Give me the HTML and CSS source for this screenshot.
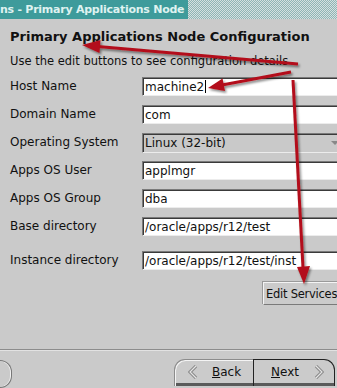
FILE: index.html
```html
<!DOCTYPE html>
<html>
<head>
<meta charset="utf-8">
<link rel="stylesheet" href="styles.css">
</head>
<body>
<div class="titlebar">
  <span class="title">ns - Primary Applications Node</span>
  <span class="dither"></span>
</div>
<main class="content">
  <h1 class="heading">Primary Applications Node Configuration</h1>
  <p class="hint">Use the edit buttons to see configuration details</p>
  <div class="form">
    <label class="lbl">Host Name</label>
    <div class="field"><span class="val">machine2</span><span class="caret"></span></div>
    <label class="lbl">Domain Name</label>
    <div class="field"><span class="val">com</span></div>
    <label class="lbl">Operating System</label>
    <div class="field select"><span class="val">Linux (32-bit)</span><span class="drop"></span></div>
    <label class="lbl">Apps OS User</label>
    <div class="field"><span class="val">applmgr</span></div>
    <label class="lbl">Apps OS Group</label>
    <div class="field"><span class="val">dba</span></div>
    <label class="lbl">Base directory</label>
    <div class="field"><span class="val">/oracle/apps/r12/test</span></div>
    <label class="lbl gap">Instance directory</label>
    <div class="field gap"><span class="val">/oracle/apps/r12/test/inst</span></div>
  </div>
  <div class="actions"><button class="btn edit">Edit Services</button></div>
</main>
<div class="sep"></div>
<footer class="nav">
  <button class="btn stub"></button>
  <div class="navgroup">
    <button class="btn back">
      <svg class="chev" width="10" height="14" viewBox="0 0 10 14"><path d="M8 1 L2 7 L8 13" fill="none" stroke="#8a8a8a" stroke-width="3.2"/><path d="M8 1 L2 7 L8 13" fill="none" stroke="#e6e6e6" stroke-width="1.1"/></svg>
      <span><u>B</u>ack</span>
    </button>
    <button class="btn next">
      <span><u>N</u>ext</span>
      <svg class="chev" width="10" height="14" viewBox="0 0 10 14"><path d="M2 1 L8 7 L2 13" fill="none" stroke="#8a8a8a" stroke-width="3.2"/><path d="M2 1 L8 7 L2 13" fill="none" stroke="#e6e6e6" stroke-width="1.1"/></svg>
    </button>
  </div>
</footer>
<svg class="arrows" width="337" height="388" viewBox="0 0 337 388">
  <defs>
    <filter id="sh" x="-20%" y="-20%" width="140%" height="140%">
      <feDropShadow dx="1.5" dy="2" stdDeviation="1.2" flood-color="#000" flood-opacity="0.45"/>
    </filter>
  </defs>
  <g filter="url(#sh)" fill="#b3111a" stroke="#b3111a">
    <line x1="298" y1="64" x2="98" y2="46.5" stroke-width="3"/>
    <polygon points="82,45 100.5,40 99.5,53" stroke="none"/>
    <line x1="291" y1="72" x2="222" y2="85" stroke-width="3"/>
    <polygon points="208,88 225,91 222.5,78.5" stroke="none"/>
    <line x1="293" y1="80" x2="303" y2="268" stroke-width="3"/>
    <polygon points="304,284 310,266 297,267" stroke="none"/>
  </g>
</svg>
</body>
</html>
```
FILE: styles.css
```css
html, body {
  margin: 0;
  padding: 0;
  width: 337px;
  height: 388px;
  overflow: hidden;
}
body {
  background: #cacaca;
  font-family: "DejaVu Sans", "Liberation Sans", sans-serif;
  color: #111;
  position: relative;
}
.titlebar {
  display: flex;
  height: 19px;
  background: #3e9b9b;
}
.title {
  color: #dff2f0;
  font-weight: bold;
  font-size: 11px;
  line-height: 19px;
  white-space: nowrap;
  padding-right: 4px;
  letter-spacing: -0.25px;
}
.dither {
  flex: 1;
  background-color: #b9cccc;
  background-image: repeating-conic-gradient(#8fb5b5 0 25%, #d6e0e0 0 50%);
  background-size: 2px 2px;
}
.content {
  padding: 10px 0 0 10px;
}
.heading {
  margin: 0;
  font-size: 13px;
  font-weight: bold;
  line-height: 16px;
  white-space: nowrap;
}
.hint {
  margin: 9px 0 0;
  font-size: 11.5px;
  line-height: 14px;
  white-space: nowrap;
}
.form {
  margin-top: 9px;
  display: grid;
  grid-template-columns: 132px 240px;
  grid-template-rows: repeat(6, 19px) 25px;
  row-gap: 9px;
}
.lbl {
  font-size: 12px;
  line-height: 19px;
  white-space: nowrap;
}
.gap {
  align-self: end;
}
.field {
  box-sizing: border-box;
  height: 19px;
  background: #fff;
  border-top: 1px solid #7a7a7a;
  border-left: 1px solid #7a7a7a;
  border-bottom: 1px solid #ececec;
  border-right: 1px solid #ececec;
  box-shadow: inset 1px 1px 0 #3a3a3a;
  display: flex;
  align-items: center;
  padding-left: 2px;
  font-size: 12px;
  white-space: nowrap;
  position: relative;
}
.field.select {
  background: #c9c9c9;
  height: 20px;
}
.caret {
  width: 1px;
  height: 13px;
  background: #000;
  margin-left: 1px;
}
.drop {
  position: absolute;
  left: 188px;
  top: 7px;
  width: 0;
  height: 0;
  border-left: 4px solid transparent;
  border-right: 4px solid transparent;
  border-top: 4px solid #888;
}
.actions {
  margin: 12px 0 0 253px;
}
.btn {
  font-family: "DejaVu Sans", "Liberation Sans", sans-serif;
  font-size: 12px;
  color: #111;
  background: #cbcbcb;
  margin: 0;
  padding: 0;
  cursor: default;
}
.edit {
  width: 84px;
  height: 23px;
  text-align: left;
  padding-left: 2px;
  font-size: 11.5px;
  letter-spacing: -0.25px;
  white-space: nowrap;
  border-top: 1px solid #f4f4f4;
  border-left: 1px solid #f4f4f4;
  border-right: 1px solid #7a7a7a;
  border-bottom: 1px solid #7a7a7a;
  box-shadow: -1px -1px 0 #9a9a9a;
}
.sep {
  margin-top: 44px;
  height: 1px;
  background: #8c8c8c;
  border-bottom: 1px solid #e2e2e2;
}
.nav {
  display: flex;
  justify-content: space-between;
  margin-top: 8px;
  padding-right: 2px;
}
.stub {
  width: 12px;
  height: 28px;
  margin-top: 1px;
  border: 1.5px solid #777;
  border-left: none;
  border-radius: 0 12px 12px 0;
  background: #cacaca;
  box-shadow: inset -1px 0 0 #f0f0f0;
}
.navgroup {
  display: flex;
}
.back, .next {
  height: 27px;
  display: flex;
  align-items: center;
  box-sizing: border-box;
  padding-bottom: 2px;
}
.back {
  width: 79px;
  border: 1px solid #8c8c8c;
  border-right: none;
  border-bottom: none;
  border-radius: 11px 0 0 0;
  box-shadow: inset 1px 1px 0 #f4f4f4, inset 0 -3px 0 #5a5a5a;
  padding-left: 13px;
  gap: 14px;
}
.next {
  width: 82px;
  border: 1.5px solid #222;
  border-bottom: none;
  border-radius: 0 11px 0 0;
  box-shadow: inset 0 -3px 0 #5a5a5a;
  padding-left: 17px;
  gap: 15px;
}
.chev {
  display: block;
}
.arrows {
  position: absolute;
  left: 0;
  top: 0;
  pointer-events: none;
}
```
